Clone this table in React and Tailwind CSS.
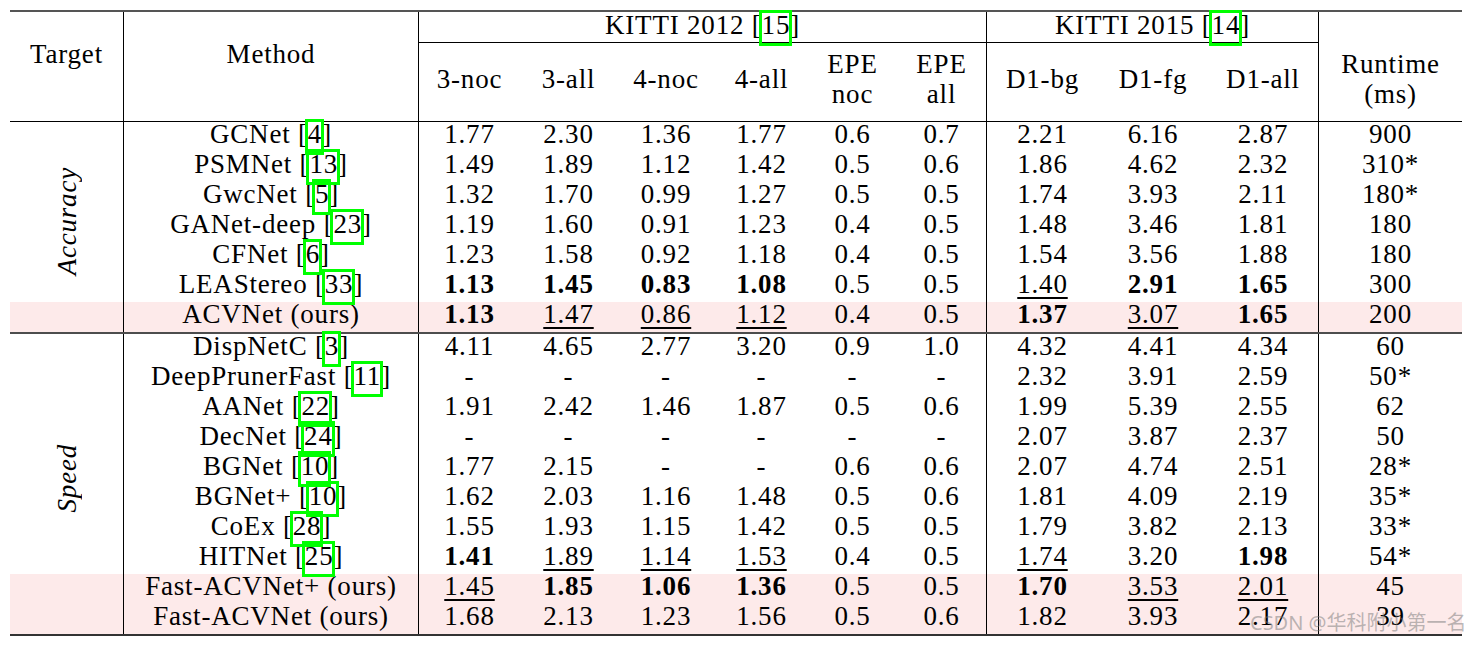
import React from 'react';

const GRID =
  'grid grid-cols-[114px_295px_101px_97px_98px_93px_89px_90px_111px_110px_111px_143px]';

const ROWSTART = [
  'row-start-1',
  'row-start-2',
  'row-start-3',
  'row-start-4',
  'row-start-5',
  'row-start-6',
  'row-start-7',
  'row-start-8',
  'row-start-9',
  'row-start-10',
];

const accuracy = [
  ['GCNet', '4', ['1.77', '2.30', '1.36', '1.77', '0.6', '0.7', '2.21', '6.16', '2.87', '900']],
  ['PSMNet', '13', ['1.49', '1.89', '1.12', '1.42', '0.5', '0.6', '1.86', '4.62', '2.32', '310*']],
  ['GwcNet', '5', ['1.32', '1.70', '0.99', '1.27', '0.5', '0.5', '1.74', '3.93', '2.11', '180*']],
  ['GANet-deep', '23', ['1.19', '1.60', '0.91', '1.23', '0.4', '0.5', '1.48', '3.46', '1.81', '180']],
  ['CFNet', '6', ['1.23', '1.58', '0.92', '1.18', '0.4', '0.5', '1.54', '3.56', '1.88', '180']],
  ['LEAStereo', '33', ['**1.13', '**1.45', '**0.83', '**1.08', '0.5', '0.5', '_1.40', '**2.91', '**1.65', '300']],
  ['ACVNet (ours)', null, ['**1.13', '_1.47', '_0.86', '_1.12', '0.4', '0.5', '**1.37', '_3.07', '**1.65', '200'], true],
];

const speed = [
  ['DispNetC', '3', ['4.11', '4.65', '2.77', '3.20', '0.9', '1.0', '4.32', '4.41', '4.34', '60']],
  ['DeepPrunerFast', '11', ['-', '-', '-', '-', '-', '-', '2.32', '3.91', '2.59', '50*']],
  ['AANet', '22', ['1.91', '2.42', '1.46', '1.87', '0.5', '0.6', '1.99', '5.39', '2.55', '62']],
  ['DecNet', '24', ['-', '-', '-', '-', '-', '-', '2.07', '3.87', '2.37', '50']],
  ['BGNet', '10', ['1.77', '2.15', '-', '-', '0.6', '0.6', '2.07', '4.74', '2.51', '28*']],
  ['BGNet+', '10', ['1.62', '2.03', '1.16', '1.48', '0.5', '0.6', '1.81', '4.09', '2.19', '35*']],
  ['CoEx', '28', ['1.55', '1.93', '1.15', '1.42', '0.5', '0.5', '1.79', '3.82', '2.13', '33*']],
  ['HITNet', '25', ['**1.41', '_1.89', '_1.14', '_1.53', '0.4', '0.5', '_1.74', '3.20', '**1.98', '54*']],
  ['Fast-ACVNet+ (ours)', null, ['_1.45', '**1.85', '**1.06', '**1.36', '0.5', '0.5', '**1.70', '_3.53', '_2.01', '45'], true],
  ['Fast-ACVNet (ours)', null, ['1.68', '2.13', '1.23', '1.56', '0.5', '0.6', '1.82', '3.93', '2.17', '39'], true],
];

function Ref({ children }) {
  return (
    <span className="relative">
      {children}
      <span className="absolute -left-[3px] -right-[2px] top-0 -bottom-[6px] border-[3px] border-[#00ff00]" />
    </span>
  );
}

function Val({ v }) {
  if (v.startsWith('**')) return <span className="font-bold">{v.slice(2)}</span>;
  if (v.startsWith('_'))
    return (
      <span className="underline decoration-[1.5px] underline-offset-[4px]">{v.slice(1)}</span>
    );
  return <span>{v}</span>;
}

function Row({ idx, row }) {
  const [name, ref, vals, pink] = row;
  return (
    <div
      className={`${ROWSTART[idx]} col-span-full grid grid-cols-subgrid h-[30px] ${
        pink ? 'bg-[#fdeaea]' : ''
      }`}
    >
      <div />
      <div className="flex items-start justify-center leading-[24px] border-r border-black whitespace-nowrap">
        <span>
          {name}
          {ref ? (
            <>
              {' ['}
              <Ref>{ref}</Ref>
              {']'}
            </>
          ) : null}
        </span>
      </div>
      {vals.map((v, i) => (
        <div
          key={i}
          className={`flex items-start justify-center leading-[24px] ${
            i === 5 || i === 8 ? 'border-r border-black' : ''
          }`}
        >
          <Val v={v} />
        </div>
      ))}
    </div>
  );
}

function Section({ rows, label, span, border, lpad }) {
  return (
    <div className={`${GRID} auto-rows-[30px] ${border}`}>
      {rows.map((r, i) => (
        <Row key={i} idx={i} row={r} />
      ))}
      <div
        className={`col-start-1 row-start-1 ${span} ${lpad} border-r border-black flex items-center justify-center`}
      >
        <span className="italic [writing-mode:vertical-rl] rotate-180">{label}</span>
      </div>
    </div>
  );
}

export default function App() {
  const sub = (t, last) => (
    <div
      className={`row-start-2 flex items-center justify-center pb-[6px] ${
        last ? 'border-r border-black' : ''
      }`}
    >
      {t}
    </div>
  );
  const sub2 = (a, b, last) => (
    <div
      className={`row-start-2 flex items-center justify-center pb-[6px] text-center leading-[30px] ${
        last ? 'border-r border-black' : ''
      }`}
    >
      <div>
        {a}
        <br />
        {b}
      </div>
    </div>
  );
  return (
    <div className="relative w-[1474px] h-[646px] bg-white overflow-hidden">
      <div
        className="ml-[10px] mt-[10px] w-[1452px] text-[27px] leading-[30px] tracking-[0.8px] text-black"
        style={{ fontFamily: '"Liberation Serif", "Times New Roman", serif' }}
      >
        {/* Header */}
        <div className={`${GRID} grid-rows-[31px_78px] border-t-2 border-b border-t-[#555] border-b-black`}>
          <div className="col-start-1 row-start-1 row-span-2 border-r border-black flex items-center justify-center pb-[26px]">
            Target
          </div>
          <div className="col-start-2 row-start-1 row-span-2 border-r border-black flex items-center justify-center pb-[26px]">
            Method
          </div>
          <div className="col-start-3 col-span-6 row-start-1 border-r border-b border-black flex items-center justify-center pb-[4px]">
            <span>
              KITTI 2012 [<Ref>15</Ref>]
            </span>
          </div>
          <div className="col-start-9 col-span-3 row-start-1 border-r border-b border-black flex items-center justify-center pb-[4px]">
            <span>
              KITTI 2015 [<Ref>14</Ref>]
            </span>
          </div>
          <div className="col-start-12 row-start-1 row-span-2 flex items-center justify-center pt-[24px] text-center leading-[30px]">
            <div>
              Runtime
              <br />
              (ms)
            </div>
          </div>
          {sub('3-noc')}
          {sub('3-all')}
          {sub('4-noc')}
          {sub('4-all')}
          {sub2('EPE', 'noc')}
          {sub2('EPE', 'all', true)}
          {sub('D1-bg')}
          {sub('D1-fg')}
          {sub('D1-all', true)}
        </div>

        <Section
          rows={accuracy}
          label="Accuracy"
          span="row-span-7"
          lpad="pb-[12px]"
          border="border-b-2 border-b-[#4d4d4d]"
        />
        <Section
          rows={speed}
          label="Speed"
          span="row-span-10"
          lpad="pb-[12px]"
          border="border-b-2 border-b-[#333]"
        />
      </div>

      <div
        className="absolute left-[1250px] top-[610px] text-[20px] leading-[26px] text-[rgba(120,120,120,0.5)] whitespace-nowrap"
        style={{ fontFamily: '"Noto Sans", "Noto Sans CJK SC", sans-serif' }}
      >
        CSDN @华科附小第一名
      </div>
    </div>
  );
}
